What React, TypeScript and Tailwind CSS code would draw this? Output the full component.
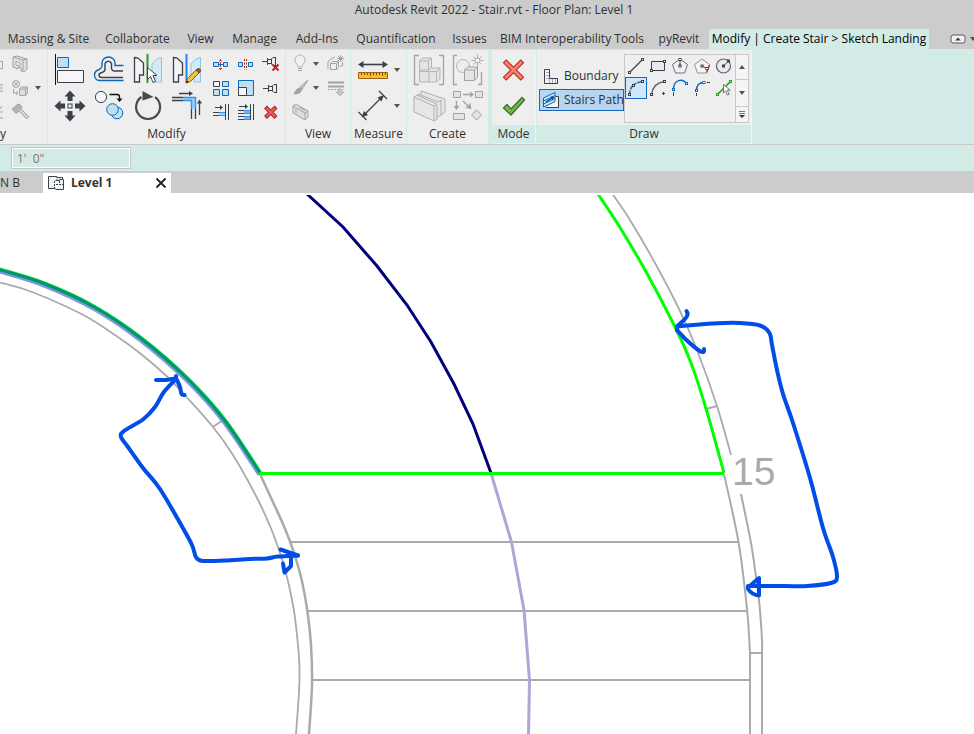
import type { ReactNode } from "react";
import clsx from "clsx";

const INK = "#3b414b";
const BLUE = "#0a68bd";
const SKY = "#bfe0f3";
const MUTED = "#a3a3a3";
const PALE = "#dedede";

/* ---------- icon wrappers ---------- */

function Large({ children }: { children: ReactNode }) {
  return (
    <svg viewBox="0 0 36 36" className="h-9 w-9 shrink-0" fill="none" aria-hidden="true">
      {children}
    </svg>
  );
}

function Small({ children }: { children: ReactNode }) {
  return (
    <svg viewBox="0 0 24 24" className="h-6 w-6 shrink-0" fill="none" aria-hidden="true">
      {children}
    </svg>
  );
}

function Caret({ className }: { className?: string }) {
  return (
    <svg viewBox="0 0 6 4" className={clsx("h-1 w-1.5 shrink-0", className)} aria-hidden="true">
      <path d="M0 0h6L3 4z" fill="#555" />
    </svg>
  );
}

function Cursor({ x, y, scale = 1 }: { x: number; y: number; scale?: number }) {
  return (
    <path
      transform={`translate(${x} ${y}) scale(${scale})`}
      d="M0 0v12l3-3 2.5 6 2.5-1-2.5-6h4z"
      fill="#fff"
      stroke={INK}
    />
  );
}

/* ---------- Modify panel ---------- */

const mirrorHalves = (
  <>
    <path d="M4.5 5.5 8 6l5.5 5v12h-4v7h-5z" fill="#f4f4f8" stroke={INK} strokeWidth="1.3" />
    <path d="M31.5 5.5 27 7l-5 5v11h3v7h6.5z" fill="#d3eaf7" stroke="#8fc3e3" />
  </>
);

const modifyLarge: { label: string; icon: ReactNode }[] = [
  {
    label: "Align",
    icon: (
      <>
        <path d="M3.5 2v31" stroke="#111" />
        <path d="M5.5 5.5h11v10h-11z" fill={SKY} stroke={BLUE} />
        <path d="M5.5 18.500h26v12h-26z" fill="#f6f6fa" stroke={INK} />
      </>
    ),
  },
  {
    label: "Offset",
    icon: (
      <>
        <path
          d="M32.5 13.5H24V11a6.500 6 0 0 0-13 0v3c0 2-1 2.500-3 3.500-3 1-4.500 3-4.500 5.500 0 3 2 5.500 5 5.500h24"
          stroke={BLUE}
          strokeWidth="1.4"
        />
        <path
          d="M32 19h-8c-2.500 0-3.500-1-3.500-3v-4.500a3.500 3.500 0 0 0-6.500 0V17c0 2-1 3-3 3.500-2 .5-3 1-3 2.500 0 2 1 2.500 3 2.500h21"
          stroke={INK}
          strokeWidth="1.4"
        />
      </>
    ),
  },
  {
    label: "Mirror - Pick Axis",
    icon: (
      <>
        {mirrorHalves}
        <path d="M17.5 2v29" stroke="#2f9a1e" strokeWidth="2" />
        <Cursor x={17.5} y={15.5} />
      </>
    ),
  },
  {
    label: "Mirror - Draw Axis",
    icon: (
      <>
        {mirrorHalves}
        <path d="M17.5 2v29" stroke="#1f86ea" strokeWidth="2" />
        <path d="m17 31 1.500-4.500 9-9 3 3-9 9z" fill="#f6bf3a" stroke="#8a5a12" />
        <path d="m27 18 2-1.500q3 0 2.500 2.500L30 21z" fill="#a85c1a" stroke="#7b4a14" />
        <path d="m17 31 1-2.500 1.500 1.500z" fill="#111" />
      </>
    ),
  },
  {
    label: "Move",
    icon: (
      <path
        d="m18 2.500 5.500 6h-3v4.500h-5V8.500h-3zM18 33.500l5.500-6h-3V23h-5v4.500h-3zM2.500 18l6-5.500v3H13v5H8.500v3zM33.500 18l-6-5.500v3H23v5h4.500v3zM15.500 15.500h5v5h-5z M16.500 16.500v3h3v-3z"
        fill={INK}
        fillRule="evenodd"
      />
    ),
  },
  {
    label: "Copy",
    icon: (
      <>
        <circle cx="10" cy="9" r="5.6" fill="#f6f6fa" stroke={INK} />
        <path d="M18.5 6.500H26q2.500 0 2.500 2.500v3" stroke="#111" strokeWidth="1.3" />
        <path d="M25.5 10.500h6L28.500 14z" fill="#111" />
        <circle cx="26" cy="25" r="5.8" fill={SKY} stroke={BLUE} />
        <circle cx="21.5" cy="21.5" r="5.8" fill={SKY} stroke={BLUE} />
      </>
    ),
  },
  {
    label: "Rotate",
    icon: (
      <>
        <path d="M11.5 9A12 12 0 1 0 25 9.200" stroke="#474a50" strokeWidth="2.2" />
        <path d="M12.5 3v9.500l11-3.500z" fill="#474a50" />
      </>
    ),
  },
  {
    label: "Trim/Extend to Corner",
    icon: (
      <>
        <path d="M10 5.500h11M3 9.500h11M3 12.500h11M22.500 21v10M26.500 21v10M30.500 27V14" stroke={INK} strokeWidth="1.3" />
        <path d="M20 3l4 2.500L20 8zM28 15.500l2.500-4 2.500 4z" fill={INK} />
        <path d="M14 11h10.500v10" stroke="#9fd0fb" strokeWidth="4" />
        <path d="M14 9.500h12.500V21M14 12.500h8.500V21" stroke="#2f93f4" strokeWidth="1.4" />
      </>
    ),
  },
];

const pin = (
  <path
    d="M4 12.500h5M9.500 9v7M9.500 10.500h3.500l2-2h2.500M9.500 14.500h3.500l2 2h2.500M17.500 8v9M13.500 10v5"
    stroke={INK}
  />
);

const modifySmall: { label: string; icon: ReactNode }[] = [
  {
    label: "Split Element",
    icon: (
      <>
        <path d="M4.5 10.500h5v4h-5zM14.500 10.500h4v4h-4zM9.500 12.500h5" fill={SKY} stroke={BLUE} />
        <path d="M11.5 7v11" stroke="#c8271e" strokeDasharray="2 1" />
        <path d="M10 9h3M10 16.500h3" stroke="#c8271e" strokeDasharray="1 1" />
      </>
    ),
  },
  {
    label: "Split with Gap",
    icon: (
      <>
        <path d="M4.5 10.500h4v4h-4zM14.500 10.500h4v4h-4z" fill={SKY} stroke={BLUE} />
        <path d="M10.5 7v11M12.500 7v11" stroke="#c8271e" strokeDasharray="2 1.5" />
      </>
    ),
  },
  {
    label: "Unpin",
    icon: (
      <>
        <g transform="translate(-1 -3)">{pin}</g>
        <path d="m13.500 12.500 6 6m0-6-6 6" stroke="#c51f1f" strokeWidth="2" />
      </>
    ),
  },
  {
    label: "Array",
    icon: (
      <>
        <path d="M4.5 5.500h6v5h-6z" fill="#f6f6fa" stroke={INK} />
        <path d="M13.5 5.500h6v5h-6zM4.500 13.500h6v6h-6zM13.500 13.500h6v6h-6z" fill={SKY} stroke={BLUE} />
      </>
    ),
  },
  {
    label: "Scale",
    icon: (
      <>
        <path d="M4.5 4.500h15v15h-15z" fill={SKY} stroke={BLUE} />
        <path d="M4.5 11.500h8v8h-8z" fill="#f6f6fa" stroke={INK} />
      </>
    ),
  },
  { label: "Pin", icon: pin },
  {
    label: "Trim/Extend Single",
    icon: (
      <>
        <path d="M4 12.500h6M4 15.500h6M16.500 4v16M19.500 4v16M6 7.500h6" stroke={INK} />
        <path d="m11 5 3 2.500L11 10z" fill={INK} />
        <path d="M10 14h6" stroke="#9fd0fb" strokeWidth="3" />
        <path d="M10 12.500h6M10 15.500h6" stroke="#2f93f4" />
      </>
    ),
  },
  {
    label: "Trim/Extend Multiple",
    icon: (
      <>
        <path d="M4 10.500h6M4 13.500h6M4 16.500h6M4 19.500h6M16.500 4v16M19.500 4v16M5 6.500h6" stroke={INK} />
        <path d="m11 4 3 2.500L11 9z" fill={INK} />
        <path d="M10 12h6M10 18h6" stroke="#6fb8f8" strokeWidth="4" />
        <path d="M10 10.500h6M10 13.500h6M10 16.500h6M10 19.500h6" stroke="#2f93f4" />
      </>
    ),
  },
  {
    label: "Delete",
    icon: (
      <>
        <path d="m6.500 7 10.500 10.500m0-10.500L6.500 17.500" stroke="#a81c1c" strokeWidth="4" />
        <path d="m7.200 7.700 9.100 9.100m0-9.100-9.100 9.100" stroke="#ee6055" strokeWidth="2.2" />
      </>
    ),
  },
];

/* ---------- Draw gallery ---------- */

function Nodes({ points, color = INK }: { points: [number, number][]; color?: string }) {
  return (
    <>
      {points.map(([x, y]) => (
        <rect key={`${x}-${y}`} x={x - 1} y={y - 1} width="2" height="2" fill="#fff" stroke={color} />
      ))}
    </>
  );
}

const drawTools: { label: string; icon: ReactNode }[] = [
  {
    label: "Line",
    icon: (
      <>
        <path d="M5.5 18.500 18.500 5.500" stroke={INK} strokeWidth="1.3" />
        <Nodes points={[[5.5, 18.5], [18.5, 5.5]]} />
      </>
    ),
  },
  {
    label: "Rectangle",
    icon: (
      <>
        <path d="M5.5 7.500h13v9h-13z" fill="#e9e9ef" stroke={INK} />
        <Nodes points={[[5.5, 16.5], [18.5, 7.5]]} />
      </>
    ),
  },
  {
    label: "Inscribed Polygon",
    icon: (
      <>
        <path d="m12 5 7.500 5.500-3 8.500h-9l-3-8.500z" fill="#f3f3f6" stroke="#6a6e76" />
        <path d="M12 6v6" stroke={INK} />
        <Nodes points={[[12, 5.5], [12, 12]]} />
      </>
    ),
  },
  {
    label: "Circumscribed Polygon",
    icon: (
      <>
        <path d="m12 5 7.500 5.500-3 8.500h-9l-3-8.500z" fill="#f3f3f6" stroke="#8d9097" />
        <path d="m19.500 11-3 7.500" stroke="#d8261c" strokeWidth="1.3" />
        <path d="m12 12 5 2.500" stroke={INK} />
        <Nodes points={[[12, 12], [17, 14.5]]} />
      </>
    ),
  },
  {
    label: "Circle",
    icon: (
      <>
        <circle cx="11.5" cy="12" r="7" fill="#e9e9ef" stroke="#5c6068" strokeWidth="1.2" />
        <path d="m11.500 12 5-5" stroke={INK} />
        <Nodes points={[[11.5, 12], [16.5, 7]]} />
      </>
    ),
  },
  {
    label: "Start-End-Radius Arc",
    icon: (
      <>
        <path d="M5.5 18.500Q6 7 18.500 5.500" stroke="#55606c" strokeWidth="1.6" strokeDasharray="4 1" />
        <Nodes points={[[5.5, 18.5], [9.5, 9.5], [18.5, 5.5]]} />
      </>
    ),
  },
  {
    label: "Center-ends Arc",
    icon: (
      <>
        <path d="M5.5 18.500Q7 7 18.500 5.500" stroke="#5c6068" strokeWidth="1.3" />
        <path d="M16 17.500h3M17.500 16v3" stroke={INK} />
        <Nodes points={[[5.5, 18.5], [18.5, 5.5]]} />
      </>
    ),
  },
  {
    label: "Tangent End Arc",
    icon: (
      <>
        <path d="M5.5 13.500C5.500 3 15 2 18.500 8" stroke={BLUE} strokeWidth="1.3" />
        <path d="M5.5 16v4" stroke={INK} />
        <Nodes points={[[5.5, 13.5], [18.5, 7.5]]} color={BLUE} />
      </>
    ),
  },
  {
    label: "Fillet Arc",
    icon: (
      <>
        <path d="M6.5 14.500Q6.500 6.500 14 6.500" stroke={BLUE} strokeWidth="1.3" />
        <path d="M6.5 17v3M17 6.500h3" stroke={INK} />
        <Nodes points={[[6.5, 14.5], [14, 6.5]]} color={BLUE} />
      </>
    ),
  },
  {
    label: "Pick Lines",
    icon: (
      <>
        <path d="M5.5 18.500 18.500 5.500" stroke="#1fa010" strokeWidth="1.6" />
        <Nodes points={[[5.5, 18.5], [18.5, 5.5]]} color="#1fa010" />
        <Cursor x={11.5} y={8.5} scale={0.7} />
      </>
    ),
  },
];

/* ---------- ribbon ---------- */

const tabs: { name: string; width: string }[] = [
  { name: "Massing & Site", width: "w-[97px]" },
  { name: "Collaborate", width: "w-[81px]" },
  { name: "View", width: "w-[45px]" },
  { name: "Manage", width: "w-[63px]" },
  { name: "Add-Ins", width: "w-[62px]" },
  { name: "Quantification", width: "w-24" },
  { name: "Issues", width: "w-[51px]" },
  { name: "BIM Interoperability Tools", width: "w-[154px]" },
  { name: "pyRevit", width: "w-[60px]" },
  { name: "Modify | Create Stair > Sketch Landing", width: "w-[220px]" },
];

function Panel({
  title,
  className,
  contextual = false,
  children,
}: {
  title: string;
  className?: string;
  contextual?: boolean;
  children: ReactNode;
}) {
  return (
    <section
      className={clsx(
        "flex shrink-0 flex-col border-r bg-[#eeeeee]",
        contextual ? "border-[#eef5f4]" : "border-[#d3ebe7]",
        className,
      )}
    >
      <div className="flex h-[75px] items-start pt-0.5">{children}</div>
      <h2 className={clsx("h-[18px] text-center leading-[18px]", contextual && "bg-[#d3ebe7]")}>{title}</h2>
    </section>
  );
}

function ToolButton({ label, className, children }: { label: string; className?: string; children: ReactNode }) {
  return (
    <button type="button" aria-label={label} className={clsx("flex items-center justify-center", className)}>
      {children}
    </button>
  );
}

function GeometryPanel() {
  return (
    <section className="flex w-12 shrink-0 flex-col border-r border-[#d3ebe7] bg-[#eeeeee]">
      <div className="flex h-[75px] items-start pt-0.5">
        <svg viewBox="0 0 8 72" className="h-[72px] w-2" fill="none" aria-hidden="true">
          <path d="M0 9.500h2.500v7H0M0 33h3M0 36h3M0 39h3M0 57l2-3M0 60h3M0 66h3" stroke={MUTED} />
        </svg>
        <div className="flex flex-col">
          <ToolButton label="Cope">
            <Small>
              <path d="m5 5 4-1 10 3v10l-3 3-3-1v-3l-3-1v2l-5-2z" fill={PALE} stroke={MUTED} />
              <path d="m5 5 10 3 4-1M15 8v11" stroke={MUTED} />
              <path d="M8 9.500 12 11v3l-4-1z" fill="#f3f3f3" stroke={MUTED} />
            </Small>
          </ToolButton>
          <ToolButton label="Join">
            <Small>
              <circle cx="8" cy="8" r="3.5" stroke={MUTED} />
              <path d="m6 6 4 4m0-4-4 4M5.500 13v4H9M8 15l2 2-2 2" stroke={MUTED} />
              <path d="m11.500 13 2-2h6v6l-2 2.500h-6zM11.500 13h6v6.500M17.500 13l2-2" fill={PALE} stroke={MUTED} />
            </Small>
          </ToolButton>
          <ToolButton label="Demolish">
            <Small>
              <path d="m4 9 6-5 2 .5 2 3-1 2-5 4z" fill="#b5b5b5" stroke={MUTED} />
              <path d="m12 10 8 8" stroke={MUTED} strokeWidth="3.5" />
              <path d="m12 10 7.500 7.500" stroke="#e8e8e8" strokeWidth="1.5" />
            </Small>
          </ToolButton>
        </div>
        <ToolButton label="Join options" className="h-[72px] w-3">
          <Caret />
        </ToolButton>
      </div>
      <h2 className="h-[18px] leading-[18px]">y</h2>
    </section>
  );
}

function ModifyPanel() {
  return (
    <Panel title="Modify" className="w-[238px]">
      <div className="grid grid-cols-4 pl-0.5">
        {modifyLarge.map((tool) => (
          <ToolButton key={tool.label} label={tool.label} className="w-[39px]">
            <Large>{tool.icon}</Large>
          </ToolButton>
        ))}
      </div>
      <div className="grid grid-cols-3 pl-0.5">
        {modifySmall.map((tool) => (
          <ToolButton key={tool.label} label={tool.label} className="w-[25px]">
            <Small>{tool.icon}</Small>
          </ToolButton>
        ))}
      </div>
    </Panel>
  );
}

function ViewPanel() {
  return (
    <Panel title="View" className="w-[65px]">
      <div className="flex flex-col pl-[3px]">
        <ToolButton label="Hide in View">
          <Small>
            <path d="M9 15c0-3-3-3.500-3-7a5 5 0 0 1 10 0c0 3.500-3 4-3 7z" fill="#f0f0f0" stroke="#b5b5b5" />
            <path d="M9 16.500h4M9 18.500h4" stroke={MUTED} />
          </Small>
        </ToolButton>
        <ToolButton label="Override Graphics">
          <Small>
            <path d="m19 4-8 7 2 2.500L19 4z" fill="#c8c8c8" stroke={MUTED} />
            <path d="M11 11.500c-4 0-4 4-7 6.500 4 1 8 0 9-4.500z" fill={MUTED} />
          </Small>
        </ToolButton>
        <ToolButton label="Selection Box">
          <Small>
            <path
              d="m4 6 3-2 12 7v6l-3 3-12-7zM4 6l12 7v7M16 13l3-2M7 9v4M10 7l6 3.500"
              fill={PALE}
              stroke={MUTED}
            />
          </Small>
        </ToolButton>
      </div>
      <div className="flex flex-col">
        <ToolButton label="Hide options" className="h-6 w-1.5">
          <Caret />
        </ToolButton>
        <ToolButton label="Override options" className="h-6 w-1.5">
          <Caret />
        </ToolButton>
      </div>
      <div className="flex flex-col pl-[5px]">
        <ToolButton label="Displace Elements">
          <Small>
            <path
              d="M4 17V9.500L7 7l4-2M6.500 11.500l2-2h6v6l-2 2h-6zM6.500 11.500h6v6M12.500 11.500l2-2M16 14h2.500v-4"
              stroke={MUTED}
            />
            <path d="M16.5 3v7M13 6.500h7M14 4l5 5M19 4l-5 5" stroke={MUTED} />
          </Small>
        </ToolButton>
        <ToolButton label="Linework">
          <Small>
            <path d="M4 6.500h16M4 10.500h16" stroke={MUTED} strokeWidth="2" />
            <path d="M4 13.500h16" stroke={MUTED} strokeDasharray="2 1" />
            <path d="M14.5 13h3v3h2.500l-4 4-4-4h2.500z" fill="#c8c8c8" stroke="#b3b3b3" />
          </Small>
        </ToolButton>
      </div>
    </Panel>
  );
}

function MeasurePanel() {
  return (
    <Panel title="Measure" className="w-14">
      <div className="flex flex-col pl-1">
        <ToolButton label="Measure Distance">
          <Large>
            <path d="M6 12.500h24" stroke={INK} strokeWidth="1.6" />
            <path d="M3 12.500 8.500 9v7zM33 12.500 27.500 9v7z" fill={INK} />
            <path d="M3.5 20.500h29v6h-29z" fill="#f5c02f" stroke="#a06014" />
            <path
              d="M6.500 21v2M9.500 21v2M12.500 21v2M15.500 21v3M18.500 21v2M21.500 21v2M24.500 21v2M27.500 21v3M30.500 21v2"
              stroke="#7d4a10"
            />
          </Large>
        </ToolButton>
        <ToolButton label="Aligned Dimension">
          <Large>
            <path d="m8 28 19-19M24 3l8 8M3.500 24l8 8" stroke={INK} strokeWidth="1.3" />
            <path d="m29 7-2.500 6.500-4-4zM6.500 29.500l2.500-6.500 4 4z" fill={INK} />
          </Large>
        </ToolButton>
      </div>
      <div className="flex flex-col">
        <ToolButton label="Measure options" className="h-9 w-3">
          <Caret />
        </ToolButton>
        <ToolButton label="Dimension options" className="h-9 w-3">
          <Caret />
        </ToolButton>
      </div>
    </Panel>
  );
}

function CreatePanel() {
  return (
    <Panel title="Create" className="w-[82px]">
      <div className="grid grid-cols-2 pl-0.5">
        <ToolButton label="Create Assembly" className="w-[39px]">
          <Large>
            <path d="M8 3.500H3.500v29H8M28 3.500h4.500v29H28" stroke={MUTED} strokeWidth="1.3" />
            <path
              d="m8.500 9 3-3h9v10h8.500v11l-3.500 3h-17zM8.500 9h9v9h-9M17.500 9l3-3M17.500 18l3-2.500M8.500 19.500h17v10M18 20v10M25.500 19.500l3.500-3"
              fill="#e4e4e4"
              stroke="#b5b5b5"
            />
          </Large>
        </ToolButton>
        <ToolButton label="Create Group" className="w-[39px]">
          <Large>
            <path d="M7 3.500H3.500v29H7M28 32.500h3.500V20" stroke={MUTED} strokeWidth="1.3" />
            <circle cx="13" cy="14" r="6.5" fill="#ededed" stroke="#b5b5b5" />
            <path d="m14.500 18 3-3h10v10l-3 3.500h-10zM14.500 18h10v10M24.500 18l3-3" fill="#e4e4e4" stroke={MUTED} />
            <path d="M27.5 2.500v12M21.500 8.500h12M23.500 4.500l8 8M31.500 4.500l-8 8" stroke="#b0b0b0" />
            <circle cx="27.5" cy="8.5" r="2.5" fill="#f5f5f5" stroke={MUTED} />
          </Large>
        </ToolButton>
        <ToolButton label="Create Parts" className="w-[39px]">
          <Large>
            <g fill="#e6e6e6" stroke="#b0b0b0">
              <path d="m10 3 24 8v13l-4 3-20-7z" />
              <path d="m7 6 20 8 3-2v15l-3 2L7 20z" />
              <path d="m3 9 3-2 20 9v15l-3 2-20-9z" />
              <path d="M3 9l20 9v15M23 18l3-2" />
            </g>
          </Large>
        </ToolButton>
        <ToolButton label="Create Similar" className="w-[39px]">
          <Large>
            <path
              d="M3.5 3.500h7v6h-7zM25.500 3.500h7v6h-7zM3.500 25.500h11v6h-11zM26.500 22l5 5-5 5-5-5z"
              fill="#e4e4e4"
              stroke={MUTED}
            />
            <path d="M13 6.500h8M6.500 13v6M13 13l6 6" stroke={MUTED} strokeWidth="1.4" />
            <path d="m20 3.500 4 3-4 3zM3.500 18h6l-3 4zM21.500 21l-6-1 5-5z" fill={MUTED} />
          </Large>
        </ToolButton>
      </div>
    </Panel>
  );
}

function ModePanel() {
  return (
    <Panel title="Mode" contextual className="w-11">
      <div className="flex flex-col pl-1">
        <ToolButton label="Cancel Edit Mode">
          <Large>
            <path d="m8.500 9 18 18M26.500 9l-18 18" stroke="#b02a20" strokeWidth="5" />
            <path d="m9.200 9.700 16.600 16.600M25.800 9.700 9.200 26.300" stroke="#fb8072" strokeWidth="3" />
          </Large>
        </ToolButton>
        <ToolButton label="Finish Edit Mode">
          <Large>
            <path
              d="m7.500 20 3.500-3.500 4 4.500L26 9.500l2.500 2.500L15 27z"
              fill="#79b44c"
              stroke="#3b7021"
              strokeWidth="1.3"
            />
          </Large>
        </ToolButton>
      </div>
    </Panel>
  );
}

function DrawPanel() {
  return (
    <Panel title="Draw" contextual className="ml-px w-[215px]">
      <div className="flex w-[87px] shrink-0 flex-col gap-0.5 pt-3 pl-0.5 whitespace-nowrap">
        <button type="button" className="flex h-[23px] items-center gap-1 border border-transparent pl-0.5">
          <svg viewBox="0 0 18 18" className="size-[18px] shrink-0" fill="none" aria-hidden="true">
            <path d="M2.5 2.500h5v9h8v5h-13z" fill="#f3f3f6" stroke={INK} />
            <path d="M4 5.500h3M4 8.500h3M4 11.500h3M7.500 12v4M10.500 12v4M13.500 12v4" stroke="#a9adb8" />
          </svg>
          Boundary
        </button>
        <button
          type="button"
          aria-pressed="true"
          className="flex h-[22px] items-center gap-1 border border-[#1466c0] bg-[#b7d4f1] pl-0.5"
        >
          <svg viewBox="0 0 18 18" className="size-[18px] shrink-0" fill="none" aria-hidden="true">
            <path d="M4 16.500h12.500v-11h-3" fill="#f3f3f6" stroke={INK} />
            <path d="M1.5 7 13 1.500v9L1.500 16z" fill="#d3eaf7" stroke={BLUE} />
            <path d="M1.5 10 13 4.500M1.500 13 13 7.500" stroke={BLUE} />
            <path d="m4 11 6-4" stroke="#0b4f94" strokeWidth="1.5" />
            <path d="m8.500 5.500 4 0-2 4z" fill="#0b4f94" />
          </svg>
          Stairs Path
        </button>
      </div>
      <div className="mt-0.5 flex h-[69px] w-[125px] border border-[#c8c8c8]">
        <div className="grid grow grid-cols-5 content-start">
          {drawTools.map((tool, i) => (
            <ToolButton
              key={tool.label}
              label={tool.label}
              className={clsx(
                "h-[22px] w-[22px] border",
                i === 5 ? "border-[#1466c0] bg-[#d0e7fa]" : "border-transparent",
              )}
            >
              <Small>{tool.icon}</Small>
            </ToolButton>
          ))}
        </div>
        <div className="flex w-[13px] flex-col border-l border-[#c8c8c8]">
          <ToolButton label="Scroll up" className="h-[25px] border-b border-[#c8c8c8] bg-[#f5f5f5]">
            <Caret className="rotate-180" />
          </ToolButton>
          <ToolButton label="Scroll down" className="h-[27px] border-b border-[#c8c8c8] bg-[#f5f5f5]">
            <Caret />
          </ToolButton>
          <ToolButton label="More draw tools" className="h-[15px] bg-[#f5f5f5]">
            <svg viewBox="0 0 8 8" className="size-2" aria-hidden="true">
              <path d="M1 0h6v1H1zM1 2h6v1H1z" fill="#777" />
              <path d="M1 4h6L4 7z" fill="#333" />
            </svg>
          </ToolButton>
        </div>
      </div>
    </Panel>
  );
}

/* ---------- floor plan ---------- */

// Smooth path through a flat list of x, y pairs (Catmull-Rom turned into cubic segments)
function spline(coords: number[]) {
  const pts: [number, number][] = [];
  for (let i = 0; i < coords.length; i += 2) pts.push([coords[i], coords[i + 1]]);

  let d = `M${pts[0][0]} ${pts[0][1]}`;
  for (let i = 0; i < pts.length - 1; i++) {
    const a = pts[Math.max(i - 1, 0)];
    const b = pts[i];
    const c = pts[i + 1];
    const e = pts[Math.min(i + 2, pts.length - 1)];
    d += `C${b[0] + (c[0] - a[0]) / 6} ${b[1] + (c[1] - a[1]) / 6} ${c[0] - (e[0] - b[0]) / 6} ${c[1] - (e[1] - b[1]) / 6} ${c[0]} ${c[1]}`;
  }
  return d;
}

const innerRail = spline([
  0, 282.5, 25, 289.5, 55, 301.5, 87, 317, 115, 335, 141, 354, 167, 376.5, 187, 397.5, 213, 427, 233, 455, 255, 494,
  270, 526, 280, 553, 287, 577, 294, 611, 298, 645, 299.5, 668, 299, 692, 296, 734,
]);

const innerStringer = spline([
  260, 474, 272, 500, 283, 524, 292, 547, 301, 577, 307.5, 612, 311, 645, 312, 685, 309, 734,
]);

const innerBoundary = spline([
  -1, 269.5, 45, 284, 95, 307.5, 141, 338.5, 187, 378.5, 225, 421, 260, 473,
]);

const outerBoundary = spline([598, 194, 620, 227.5, 647, 273.5, 675, 327, 691, 363, 706, 408.5, 724, 473]);

const penStrokes = [
  spline([156, 380, 166, 380, 176, 378.5]),
  "M176 376V379L175 380",
  spline([177, 380, 180, 387, 181.5, 394, 184.5, 395]),
  spline([175, 380, 163.5, 392.5, 155, 407, 143, 419.5, 124, 431, 121, 437, 128, 447, 143, 468, 160, 489, 182, 526.5, 192, 545, 196.500, 558, 205, 561, 225, 560.500, 250, 559, 267, 558.500, 278, 556.500, 298, 555.500]),
  "M280.500 549.500 298 555.500",
  "M291 558V566L284.500 572.500 283 563.500",
  "M686.500 311Q689.500 315 684 320L677 326.500V330",
  spline([677, 330, 687, 340.5, 699, 350.5, 703.500, 352, 704, 349]),
  spline([677, 326.5, 713, 323.5, 740, 323, 760, 325.500, 769.500, 333, 772, 345, 777, 370, 783, 394, 793, 423, 810, 478, 823, 528, 833, 557, 837, 577, 831, 583, 807, 586, 785, 586, 748, 586]),
  "M748 587.500 759 578V595.500Q752 595 748 589",
];

function FloorPlan() {
  return (
    <svg viewBox="0 193 974 541" className="block w-full" fill="none" role="img" aria-label="Floor plan">
      <defs>
        <clipPath id="view">
          <path d="M0 195h974v539H0z" />
        </clipPath>
      </defs>
      <g clipPath="url(#view)">
        {/* stringers and railings */}
        <g stroke="#aaaaaa" strokeWidth="2">
          <path d={innerRail} strokeWidth="1.8" />
          <path d={innerStringer} strokeWidth="2.5" />
          <path d="M213 427 223 420" />
          <path d={spline([612.5, 194, 630, 220, 655, 263, 680, 311, 697, 350, 717, 406, 731, 455])} strokeWidth="1.8" />
          <path d={spline([741, 494, 751, 543, 756, 577, 759.5, 605, 762, 640, 762, 653])} />
          <path d="M762 653V734" />
          <path d={spline([724, 474, 738.5, 542, 747, 609, 750, 653])} />
          <path d="M750 653V734M750 653h12M706 409l11-3" />
          {/* treads */}
          <path d="M290 542H738M307 611H747M312 680H750" />
        </g>
        <text x="732" y="485" fontSize="39" fill="#aaaaaa" className="font-['Liberation_Sans',Arial,sans-serif]">
          15
        </text>

        {/* stair path */}
        <path d="M491 473 511.500 542 524 610 529.500 680 528.500 734" stroke="#a9a9d6" strokeWidth="3" />
        <path
          d="M307 194 343 227 377 266 407 305 431 342 454 384 473 424 491 473"
          stroke="#00007c"
          strokeWidth="3"
        />

        {/* sketch boundary */}
        <path d={innerBoundary} transform="translate(-1 2)" stroke="#7c98e2" strokeWidth="3" />
        <path d={innerBoundary} transform="translate(1 -1)" stroke="#00e63a" strokeWidth="2" />
        <path d={innerBoundary} stroke="#00966a" strokeWidth="3" />
        <path d="M259 473.500H724" stroke="#00ff00" strokeWidth="3" />
        <path d={outerBoundary} stroke="#00ff00" strokeWidth="3" />
      </g>

      {/* pen markup */}
      <g stroke="#004de8" strokeWidth="4" strokeLinecap="round" strokeLinejoin="round">
        {penStrokes.map((d) => (
          <path key={d} d={d} />
        ))}
      </g>
    </svg>
  );
}

export default function App() {
  return (
    <div className="min-h-screen overflow-hidden bg-white font-['Open_Sans',sans-serif] text-[12px] text-[#303030]">
      <header className="bg-[#cccccc]">
        <h1 className="h-[29px] pl-[14px] text-center leading-5">
          Autodesk Revit 2022 - Stair.rvt - Floor Plan: Level 1
        </h1>
        <nav className="flex h-5 items-center">
          {tabs.map((tab, i) => (
            <button
              key={tab.name}
              type="button"
              className={clsx(
                "flex h-5 shrink-0 items-center justify-center whitespace-nowrap",
                tab.width,
                i === tabs.length - 1 && "bg-[#d3ebe7] text-black",
              )}
            >
              {tab.name}
            </button>
          ))}
          <button type="button" aria-label="Minimize ribbon" className="ml-auto flex items-center gap-1">
            <svg viewBox="0 0 16 10" className="h-2.5 w-4" fill="none" aria-hidden="true">
              <rect x="1" y="1" width="14" height="8" rx="2" fill="#f2f2f2" stroke="#555a63" />
              <path d="M5 6.500h6L8 3.500z" fill={INK} />
            </svg>
            <Caret className="-mr-0.5" />
          </button>
        </nav>
      </header>

      <div className="flex h-24 overflow-hidden border-t border-b border-t-[#d3ebe7] border-b-[#c6cbca] bg-[#d3ebe7]">
        <GeometryPanel />
        <ModifyPanel />
        <ViewPanel />
        <MeasurePanel />
        <CreatePanel />
        <div className="w-[3px] shrink-0" />
        <ModePanel />
        <DrawPanel />
      </div>

      <div className="flex h-[26px] items-center bg-[#d3ebe7] pl-[11px]">
        <input
          aria-label="Offset"
          defaultValue={"1'  0\""}
          className="h-[22px] w-[120px] border border-[#c4c4c4] bg-transparent pl-[5px] text-[#7d766a] shadow-[inset_0_0_0_1px_#fff]"
        />
      </div>

      <div className="flex h-[22px] items-end bg-[#cccccc]">
        <button type="button" className="h-5 w-[43px] text-left">
          N B
        </button>
        <div className="flex h-5 w-32 items-center bg-white px-1 font-bold">
          <svg viewBox="0 0 18 16" className="h-4 w-[18px]" fill="none" aria-hidden="true">
            <path d="M1.5 1.500h8l1 1h5v11h-14z" fill="#f3f3f6" stroke={INK} />
            <path d="M7.5 6v8M10 1.500V5" stroke={INK} strokeDasharray="2 1" />
            <path d="M8.5 5.500h4v-1h4v10h-8" fill="#f3f3f6" stroke={INK} />
            <path d="M9 9.500h7M12.500 6v3" stroke={INK} strokeDasharray="2 1" />
          </svg>
          <button type="button" className="grow pl-1.5 text-left">
            Level 1
          </button>
          <button type="button" aria-label="Close view">
            <svg viewBox="0 0 12 12" className="size-3" aria-hidden="true">
              <path d="m1.500 1.500 9 9m0-9-9 9" stroke="#222" strokeWidth="1.8" />
            </svg>
          </button>
        </div>
      </div>

      <main>
        <FloorPlan />
      </main>
    </div>
  );
}
